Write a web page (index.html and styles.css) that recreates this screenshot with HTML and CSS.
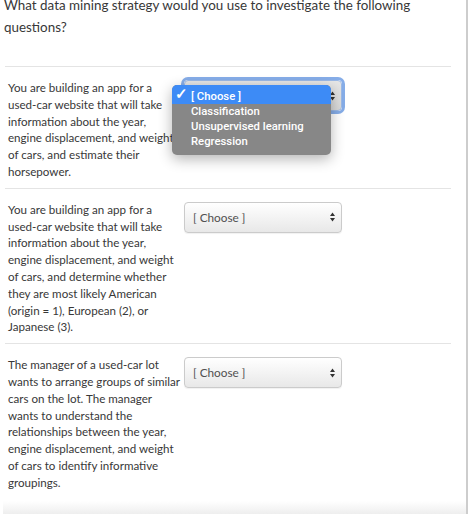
FILE: index.html
```html
<!DOCTYPE html>
<html lang="en">
<head>
    <meta charset="utf-8" />
    <meta name="viewport" content="width=device-width, initial-scale=1.0" />
    <title>Matching question</title>
    <link rel="stylesheet" href="styles.css">
</head>
<body>
    <div id="question">
        <p class="questionText">What data mining strategy would you use to investigate the following questions?</p>

        <div id="answers">
            <div class="answerRow">
                <div class="answerLeft">You are building an app for a <span class="nobr">used-car</span> website that will take information about the year, engine displacement, and weight of cars, and estimate their horsepower.</div>
                <div class="answerRight">
                    <div class="select focused">
                        <span class="selectValue">[ Choose ]</span>
                        <svg class="arrows" width="5" height="10" viewBox="0 0 5 10"><path d="M2.5 0.5 L5 4 H0 Z M2.5 9.5 L5 6 H0 Z" fill="#333"/></svg>
                    </div>
                    <ul class="menu">
                        <li class="current"><span class="check">✓</span>[ Choose ]</li>
                        <li>Classification</li>
                        <li>Unsupervised learning</li>
                        <li>Regression</li>
                    </ul>
                </div>
            </div>

            <div class="answerRow">
                <div class="answerLeft">You are building an app for a <span class="nobr">used-car</span> website that will take information about the year, engine displacement, and weight of cars, and determine whether they are most likely American (origin = 1), European (2), or Japanese (3).</div>
                <div class="answerRight">
                    <div class="select">
                        <span class="selectValue">[ Choose ]</span>
                        <svg class="arrows" width="5" height="10" viewBox="0 0 5 10"><path d="M2.5 0.5 L5 4 H0 Z M2.5 9.5 L5 6 H0 Z" fill="#333"/></svg>
                    </div>
                </div>
            </div>

            <div class="answerRow">
                <div class="answerLeft">The manager of a <span class="nobr">used-car</span> lot wants to arrange groups of similar cars on the lot. The manager wants to understand the relationships between the year, engine displacement, and weight of cars to identify informative groupings.</div>
                <div class="answerRight">
                    <div class="select">
                        <span class="selectValue">[ Choose ]</span>
                        <svg class="arrows" width="5" height="10" viewBox="0 0 5 10"><path d="M2.5 0.5 L5 4 H0 Z M2.5 9.5 L5 6 H0 Z" fill="#333"/></svg>
                    </div>
                </div>
            </div>
        </div>

        <div id="footer"></div>
    </div>
</body>
</html>
```

FILE: styles.css
```css
body {
    margin: 0;
    font-family: Lato, "Open Sans", sans-serif;
    color: #383838;
    background-color: #fff;
}
#question {
    width: 466px;
    min-height: 514px;
    border-right: 2px solid #cdcdcd;
    display: flex;
    flex-direction: column;
}
.questionText {
    margin: -6px 0 0 0;
    padding: 0 10px 0 4px;
    font-size: 13.4px;
    line-height: 22px;
    height: 72px;
    flex-shrink: 0;
}
#answers {
    margin: 0 15px 0 5px;
}
.answerRow {
    display: flex;
    border-top: 1px solid #e4e4e4;
    padding: 13px 0 7px 3px;
}
.answerLeft {
    width: 173px;
    font-size: 11.6px;
    line-height: 16.8px;
}
.nobr {
    white-space: nowrap;
}
.answerRight {
    position: relative;
    margin-left: 3px;
}
.select {
    width: 142px;
    height: 29px;
    border: 1px solid #cbcbcb;
    border-radius: 4px;
    background: linear-gradient(#ffffff, #e8e8e8);
    box-shadow: 0 1px 1px rgba(0, 0, 0, 0.06);
    display: flex;
    align-items: center;
    justify-content: space-between;
    padding: 0 6px 0 8px;
    font-size: 11.8px;
    color: #505050;
}
.select.focused {
    background: linear-gradient(#e6e6e6, #d9d9d9);
    box-shadow: 0 0 0 3px #86ade8;
    border-color: #9bb9e6;
}
.arrows {
    display: block;
}
.menu {
    position: absolute;
    left: -12px;
    top: 5px;
    width: 159px;
    margin: 0;
    padding: 0 0 6px 0;
    list-style: none;
    background-color: #878787;
    border-radius: 5px;
    box-shadow: 0 4px 14px rgba(0, 0, 0, 0.3);
    font-family: Roboto, "Liberation Sans", sans-serif;
    font-weight: 500;
    font-size: 11.3px;
    color: #fff;
    overflow: hidden;
}
.menu li {
    line-height: 15px;
    padding-left: 19px;
}
.menu li.current {
    background-color: #3d8bf6;
    padding-top: 4px;
    position: relative;
}
.check {
    position: absolute;
    left: 3px;
    top: 2px;
    font-size: 15px;
    font-weight: 700;
}
#footer {
    flex: 1;
    margin: 2px 0 0 3px;
    background: linear-gradient(#ffffff, #eeeeee);
}
```
